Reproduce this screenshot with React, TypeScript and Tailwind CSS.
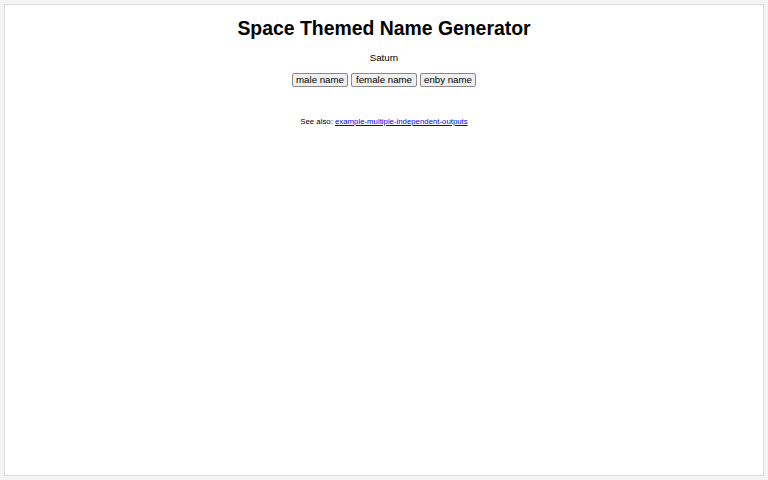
export default function App() {
  return (
    <div className="h-[480px] w-[768px] bg-[#f4f4f4] p-[4px] font-['Liberation_Sans',Arial,sans-serif] text-black">
      <div className="flex h-[472px] flex-col items-center border border-[#dcdcdc] bg-white">
        <h1 className="mt-[11px] text-[19.4px] font-bold leading-[24px]">Space Themed Name Generator</h1>
        <p className="mt-[12px] text-[9.7px] leading-[12px]">Saturn</p>
        <div className="mt-[9px] flex gap-[3px]">
          {['male name', 'female name', 'enby name'].map((label) => (
            <button
              key={label}
              className="h-[14px] rounded-[2px] border border-[#8a8a8a] bg-[#efefef] px-[3.5px] text-[9.7px] leading-[12px]"
            >
              {label}
            </button>
          ))}
        </div>
        <p className="mt-[30px] text-[7.8px] leading-[10px]">
          See also:{' '}
          <a href="#" className="text-[#0000ee] underline">
            example-multiple-independent-outputs
          </a>
        </p>
      </div>
    </div>
  );
}
